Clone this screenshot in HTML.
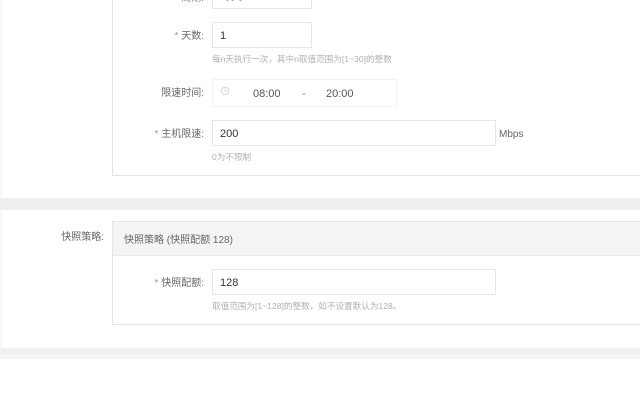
<!DOCTYPE html>
<html><head><meta charset="utf-8"><style>
html,body{margin:0;padding:0;background:#fff}
body{width:640px;height:400px;position:relative;overflow:hidden;font-family:"Liberation Sans","Noto Sans CJK SC",sans-serif;font-size:10px;color:#666}
div{position:absolute;box-sizing:border-box;white-space:nowrap}
.l{left:112px;width:92px;text-align:right;line-height:14px;color:#666;font-size:10px}
.i{left:212px;height:26px;border:1px solid #e6e6e6;background:#fff;color:#333;font-size:11px;line-height:26px;padding-left:7px}
.h{left:212px;font-size:8.6px;color:#b0b0b0;line-height:12px}
</style></head><body>
<div style="left:0;top:198px;width:640px;height:12px;background:#efefef"></div>
<div style="left:0;top:0;width:2px;height:198px;background:#f7f7f7"></div>
<div style="left:0;top:210px;width:2px;height:138px;background:#f7f7f7"></div>
<div style="left:0;top:348px;width:640px;height:6px;background:#f0f0f0"></div>
<div style="left:0;top:354px;width:640px;height:5px;background:#f6f6f6"></div>

<div style="left:112px;top:-30px;width:540px;height:206px;border:1px solid #e4e4e4"></div>
<div class="l" style="top:-8px;color:#888"><span style="color:#aaa">* </span>周期:</div>
<div class="i" style="top:-17px;width:100px;color:#999">每天</div>
<div class="l" style="top:30px"><span style="color:#999">* </span>天数:</div>
<div class="i" style="top:22px;width:100px">1</div>
<div class="h" style="top:53px">每n天执行一次，其中n取值范围为[1~30]的整数</div>
<div class="l" style="top:87px">限速时间:</div>
<div class="i" style="top:79px;width:185px;height:28px;border-color:#f2f2f2"></div>
<svg style="position:absolute;left:220px;top:86px" width="10" height="10" viewBox="0 0 10 10" fill="none" stroke="#cfcfcf" stroke-width=".8"><circle cx="5" cy="5" r="3.7"/><path d="M5 2.8V5L6.6 5.8"/></svg>
<div style="left:253px;top:87px;font-size:11px;line-height:15px;color:#555">08:00</div>
<div style="left:302px;top:87px;font-size:11px;line-height:15px;color:#777">-</div>
<div style="left:326px;top:87px;font-size:11px;line-height:15px;color:#555">20:00</div>
<div class="l" style="top:128px"><span style="color:#999">* </span>主机限速:</div>
<div class="i" style="top:120px;width:284px;padding-left:7px">200</div>
<div style="left:499px;top:128px;font-size:10px;line-height:14px;color:#666">Mbps</div>
<div class="h" style="top:151px">0为不限制</div>

<div class="l" style="left:12px;top:231px">快照策略:</div>
<div style="left:112px;top:221px;width:540px;height:104px;border:1px solid #e4e4e4"></div>
<div style="left:113px;top:222px;width:527px;height:34px;background:#f4f4f4;border-bottom:1px solid #ececec"></div>
<div style="left:124px;top:234px;font-size:10px;line-height:14px;color:#666">快照策略 (快照配额 128)</div>
<div class="l" style="top:277px"><span style="color:#999">* </span>快照配额:</div>
<div class="i" style="top:269px;width:284px">128</div>
<div class="h" style="top:300px">取值范围为[1~128]的整数，如不设置默认为128。</div>
</body></html>
